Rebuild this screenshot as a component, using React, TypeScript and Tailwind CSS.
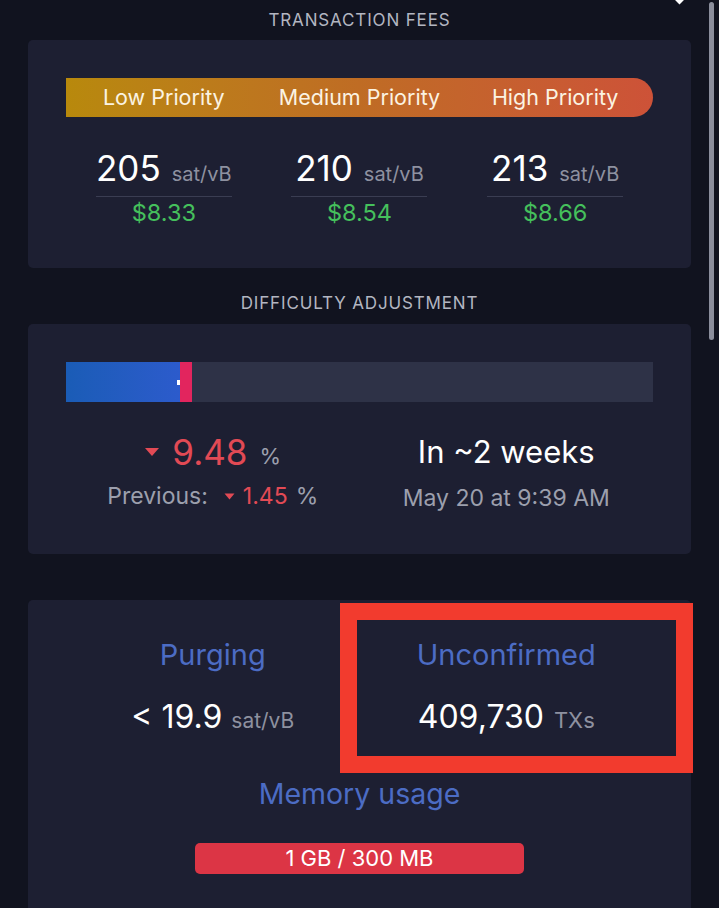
import React from "react";

const FEES = [
  { label: "Low Priority", rate: "205", usd: "$8.33" },
  { label: "Medium Priority", rate: "210", usd: "$8.54" },
  { label: "High Priority", rate: "213", usd: "$8.66" },
];

function SectionTitle({ children }: { readonly children: React.ReactNode }): React.JSX.Element {
  return (
    <h2 className="text-center text-[17px] uppercase leading-6 tracking-[0.05em] text-[#b3b6c1]">
      {children}
    </h2>
  );
}

function Card({ children, className = "" }: { readonly children: React.ReactNode; readonly className?: string }): React.JSX.Element {
  return <div className={`rounded-[5px] bg-[#1d1f32] px-[38px] ${className}`}>{children}</div>;
}

function Down({ size = "md" }: { readonly size?: "md" | "sm" }): React.JSX.Element {
  return size === "md" ? (
    <svg width="16" height="10" viewBox="0 0 16 10" className="mr-3 inline-block">
      <path d="M1 1 H15 L8 9 Z" fill="#e24a55" />
    </svg>
  ) : (
    <svg width="11" height="7" viewBox="0 0 11 7" className="mr-2 inline-block">
      <path d="M0.5 0.5 H10.5 L5.5 6.5 Z" fill="#e24a55" />
    </svg>
  );
}

function FeesCard(): React.JSX.Element {
  return (
    <Card className="pb-[41px] pt-[38px]">
      <div className="grid h-[39px] grid-cols-3 items-center rounded-r-full bg-gradient-to-r from-[#b8890c] via-[#bf6c24] to-[#cd5238] text-[21.5px] text-[#fbf3e2]">
        {FEES.map((f) => (
          <span key={f.label} className="text-center">
            {f.label}
          </span>
        ))}
      </div>
      <div className="mt-[31px] grid grid-cols-3">
        {FEES.map((f) => (
          <div key={f.label} className="flex justify-center">
            <div className="w-[136px]">
              <div className="flex h-[49px] items-baseline justify-center gap-[11px] border-b border-[#3a3d52] pb-[8px] leading-10">
                <span className="text-[35px] text-white">{f.rate}</span>
                <span className="text-[20px] text-[#8e91a0]">sat/vB</span>
              </div>
              <div className="pt-[2px] text-center text-[23.5px] leading-7 text-[#45c05c]">{f.usd}</div>
            </div>
          </div>
        ))}
      </div>
    </Card>
  );
}

function DifficultyCard(): React.JSX.Element {
  return (
    <Card className="pb-[42px] pt-[38px]">
      <div className="flex h-[40px] bg-[#2e3247]">
        <div className="relative w-[114px] bg-gradient-to-r from-[#1a5cb6] to-[#2c5bcc]">
          <span className="absolute right-0 top-[18px] h-[5px] w-[3px] bg-white" />
        </div>
        <div className="w-[12px] bg-[#e2255e]" />
      </div>
      <div className="mt-[30px] grid grid-cols-2">
        <div className="flex flex-col items-center">
          <div className="flex h-10 items-center">
            <Down />
            <span className="text-[35px] text-[#e24a55]">9.48</span>
            <span className="ml-3 mt-2 text-[22px] text-[#9c9fad]">%</span>
          </div>
          <div className="mt-[10px] flex h-7 items-center text-[23px]">
            <span className="mr-4 text-[#9c9fad]">Previous:</span>
            <Down size="sm" />
            <span className="text-[#e24a55]">1.45</span>
            <span className="ml-2 text-[#9c9fad]">%</span>
          </div>
        </div>
        <div className="flex flex-col items-center">
          <div className="flex h-10 items-center text-[31px] text-white">In ~2 weeks</div>
          <div className="mt-[12px] flex h-7 items-center text-[23px] text-[#9c9fad]">May 20 at 9:39 AM</div>
        </div>
      </div>
    </Card>
  );
}

function MempoolCard(): React.JSX.Element {
  return (
    <Card className="pb-10 pt-[38px]">
      <div className="grid grid-cols-2">
        <div className="flex flex-col items-center">
          <div className="text-[29px] leading-[34px] text-[#4c6cc4]">Purging</div>
          <div className="mt-[27px] flex h-9 items-baseline gap-[9px] leading-9">
            <span className="text-[32px] text-white">&lt; 19.9</span>
            <span className="text-[21px] text-[#8e91a0]">sat/vB</span>
          </div>
        </div>
        <div className="flex flex-col items-center">
          <div className="text-[29px] leading-[34px] text-[#4c6cc4]">Unconfirmed</div>
          <div className="mt-[27px] flex h-9 items-baseline gap-[10px] leading-9">
            <span className="text-[32px] text-white">409,730</span>
            <span className="text-[22px] text-[#8e91a0]">TXs</span>
          </div>
        </div>
      </div>
      <div className="mt-[42px] text-center text-[28.5px] leading-[34px] text-[#4c6cc4]">Memory usage</div>
      <div className="mx-auto mt-[32px] flex h-[31px] w-[329px] items-center justify-center rounded-[5px] bg-[#dc3545] text-[22px] text-white">
        1 GB / 300 MB
      </div>
    </Card>
  );
}

export default function App(): React.JSX.Element {
  return (
    <div
      className="relative h-[908px] overflow-hidden bg-[#11131f]"
      style={{ fontFamily: "Inter, 'Noto Sans', sans-serif" }}
    >
      <div className="px-[28px]">
        <div className="pb-[8px] pt-[8px]">
          <SectionTitle>Transaction Fees</SectionTitle>
        </div>
        <FeesCard />
        <div className="pb-[9px] pt-[23px]">
          <SectionTitle>Difficulty Adjustment</SectionTitle>
        </div>
        <DifficultyCard />
        <div className="mt-[46px]">
          <MempoolCard />
        </div>
      </div>

      {/* scroll indicator */}
      <div className="absolute right-[5px] top-[2px] h-[338px] w-[5px] rounded-full bg-[#8b8e9c]" />
      {/* clipped glyph at the top edge */}
      <div className="absolute left-[676px] top-[-4px] h-[7px] w-[7px] rotate-45 bg-white" />
      {/* red highlight annotation */}
      <div className="absolute left-[340px] top-[603px] h-[170px] w-[353px] border-[17px] border-[#f23b2e]" />
    </div>
  );
}
